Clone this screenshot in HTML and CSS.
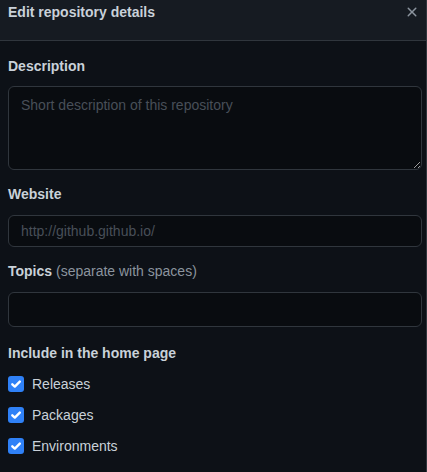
FILE: index.html
```html
<!DOCTYPE html>
<html>
<head>
<meta charset="utf-8">
<link rel="stylesheet" href="styles.css">
</head>
<body>
<div class="dialog">
  <div class="header">
    <h1 class="title">Edit repository details</h1>
    <button class="close" aria-label="Close">
      <svg width="16" height="16" viewBox="0 0 16 16"><path fill="currentColor" d="M3.72 3.72a.75.75 0 0 1 1.06 0L8 6.94l3.22-3.22a.749.749 0 0 1 1.275.326.749.749 0 0 1-.215.734L9.06 8l3.22 3.22a.749.749 0 0 1-.326 1.275.749.749 0 0 1-.734-.215L8 9.06l-3.22 3.22a.751.751 0 0 1-1.042-.018.751.751 0 0 1-.018-1.042L6.94 8 3.72 4.78a.75.75 0 0 1 0-1.06Z"/></svg>
    </button>
  </div>
  <div class="body">
    <div class="field f-desc">
      <label class="label">Description</label>
      <textarea class="input textarea" placeholder="Short description of this repository"></textarea>
    </div>
    <div class="field">
      <label class="label">Website</label>
      <input class="input text" type="text" placeholder="http://github.github.io/">
    </div>
    <div class="field">
      <label class="label">Topics <span class="note">(separate with spaces)</span></label>
      <input class="input text topics" type="text">
    </div>
    <div class="field f-home">
      <div class="label">Include in the home page</div>
      <div class="checks">
        <label class="check"><span class="box"><svg width="12" height="12" viewBox="0 0 12 12"><path fill="none" stroke="#fff" stroke-width="2.4" stroke-linecap="round" stroke-linejoin="round" d="M2.3 6.3 4.8 8.6 9.8 3.6"/></svg></span>Releases</label>
        <label class="check"><span class="box"><svg width="12" height="12" viewBox="0 0 12 12"><path fill="none" stroke="#fff" stroke-width="2.4" stroke-linecap="round" stroke-linejoin="round" d="M2.3 6.3 4.8 8.6 9.8 3.6"/></svg></span>Packages</label>
        <label class="check"><span class="box"><svg width="12" height="12" viewBox="0 0 12 12"><path fill="none" stroke="#fff" stroke-width="2.4" stroke-linecap="round" stroke-linejoin="round" d="M2.3 6.3 4.8 8.6 9.8 3.6"/></svg></span>Environments</label>
      </div>
    </div>
  </div>
</div>
</body>
</html>
```
FILE: styles.css
```css
html, body {
  margin: 0;
  padding: 0;
  background: #0d1117;
  font-family: "Liberation Sans", Arial, sans-serif;
  font-size: 14px;
  line-height: 20px;
  color: #c9d1d9;
}
.dialog {
  width: 426px;
  height: 472px;
  border-right: 1px solid #30363d;
  background: #0d1117;
  overflow: hidden;
}
.header {
  box-sizing: border-box;
  height: 41px;
  padding: 2px 8px 0 8px;
  background: #161b22;
  border-bottom: 1px solid #30363d;
  display: flex;
  justify-content: space-between;
  align-items: flex-start;
}
.title {
  margin: 0;
  font-size: 14px;
  font-weight: bold;
  line-height: 20px;
  color: #c9d1d9;
}
.close {
  margin: 2px -2px 0 0;
  padding: 0;
  border: 0;
  background: transparent;
  color: #8b949e;
  width: 16px;
  height: 16px;
  display: flex;
}
.body {
  padding: 15px 8px 8px 8px;
  display: flex;
  flex-direction: column;
  gap: 14px;
}
.field {
  display: flex;
  flex-direction: column;
  gap: 11px;
}
.f-desc { gap: 10px; }
.f-home { gap: 10px; margin-top: 2px; }
.label {
  font-weight: bold;
  color: #c9d1d9;
  line-height: 20px;
}
.note {
  font-weight: normal;
  color: #8b949e;
}
.input {
  box-sizing: border-box;
  width: 414px;
  margin: 0;
  background: #090c10;
  border: 1px solid #30363d;
  border-radius: 6px;
  color: #c9d1d9;
  font-family: "Liberation Sans", Arial, sans-serif;
  font-size: 14px;
  line-height: 20px;
  padding: 5px 12px;
  outline: none;
}
.input::placeholder { color: #484f58; }
.textarea {
  height: 84px;
  padding-top: 8px;
  resize: vertical;
  display: block;
}
.text { height: 32px; }
.topics { height: 35px; }
.checks {
  display: flex;
  flex-direction: column;
  gap: 11px;
  margin-top: 1px;
}
.check {
  display: flex;
  align-items: center;
  gap: 8px;
  height: 20px;
  color: #c9d1d9;
}
.box {
  width: 16px;
  height: 16px;
  border-radius: 3px;
  background: #2f81f7;
  display: flex;
  align-items: center;
  justify-content: center;
}
```
